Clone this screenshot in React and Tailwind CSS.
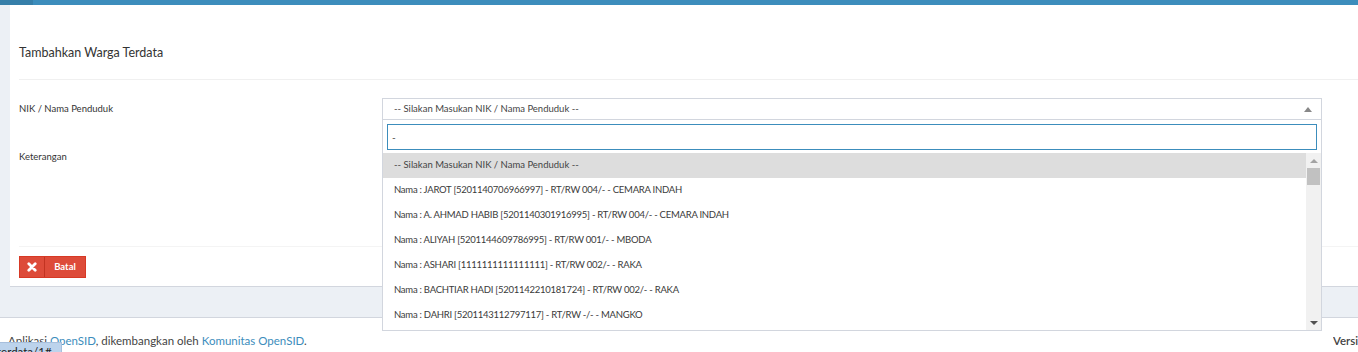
import React from "react";

const options = [
  "Nama : JAROT [5201140706966997] - RT/RW 004/- - CEMARA INDAH",
  "Nama : A. AHMAD HABIB [5201140301916995] - RT/RW 004/- - CEMARA INDAH",
  "Nama : ALIYAH [5201144609786995] - RT/RW 001/- - MBODA",
  "Nama : ASHARI [1111111111111111] - RT/RW 002/- - RAKA",
  "Nama : BACHTIAR HADI [5201142210181724] - RT/RW 002/- - RAKA",
  "Nama : DAHRI [5201143112797117] - RT/RW -/- - MANGKO",
  "Nama : DARMAWAN [5201140105836993] - RT/RW 003/- - MANGKO",
];

export default function App() {
  return (
    <div
      className="relative h-[352px] w-[1358px] overflow-hidden bg-[#ecf0f5] text-[#333]"
      style={{ fontFamily: "Lato, 'Noto Sans', sans-serif" }}
    >
      {/* top bar */}
      <div className="flex h-[5px]">
        <div className="w-[33px] bg-[#367fa9]" />
        <div className="flex-1 bg-[#3c8dbc]" />
      </div>

      <div className="pl-[10px]">
        <div className="w-[1400px] border-b border-[#d2d6de] bg-white px-[9px]">
          <div className="flex h-[75px] items-end border-b border-[#f0f0f0] pb-[16px]">
            <h3 className="text-[12.5px] leading-[20px] text-[#333]">Tambahkan Warga Terdata</h3>
          </div>

          <div className="h-[166px] pt-[18px]">
            <div className="flex items-center">
              <label className="w-[363px] text-[9.5px] text-[#333]">NIK / Nama Penduduk</label>
              <div className="relative w-[940px]">
                <div className="flex h-[22px] items-center justify-between border border-[#d2d6de] pl-[11px] pr-[9px] text-[9.5px] text-[#444]">
                  <span>-- Silakan Masukan NIK / Nama Penduduk --</span>
                  <span className="h-0 w-0 border-x-[4px] border-b-[5px] border-x-transparent border-b-[#888]" />
                </div>

                {/* open dropdown */}
                <div className="absolute left-0 top-full z-10 w-[940px] border border-t-0 border-[#d2d6de] bg-white">
                  <div className="px-[4px] pb-[3px] pt-[4px]">
                    <div className="flex h-[26px] items-center border border-[#3c8dbc] px-[4px] text-[10px] text-[#444]">
                      -
                    </div>
                  </div>
                  <div className="flex h-[177px]">
                    <ul className="flex-1 overflow-hidden">
                      <li className="flex h-[25px] items-center bg-[#ddd] pl-[11px] text-[9.5px] text-[#444]">
                        -- Silakan Masukan NIK / Nama Penduduk --
                      </li>
                      {options.map((o) => (
                        <li
                          key={o}
                          className="flex h-[25px] items-center pl-[11px] text-[9.5px] tracking-[-0.25px] text-[#3a3a3a]"
                        >
                          {o}
                        </li>
                      ))}
                    </ul>
                    <div className="flex w-[15px] flex-col items-center bg-[#f1f1f1]">
                      <span className="mt-[6px] h-0 w-0 border-x-[4px] border-b-[4px] border-x-transparent border-b-[#a3a3a3]" />
                      <div className="mt-[5px] h-[17px] w-[13px] bg-[#c1c1c1]" />
                      <div className="flex-1" />
                      <span className="mb-[5px] h-0 w-0 border-x-[4px] border-t-[4px] border-x-transparent border-t-[#505050]" />
                    </div>
                  </div>
                </div>
              </div>
            </div>

            <div className="mt-[27px] flex items-start">
              <label className="w-[363px] pt-[3px] text-[9.5px] text-[#333]">Keterangan</label>
              <textarea className="h-[80px] w-[940px] border border-[#d2d6de]" />
            </div>
          </div>

          <div className="flex h-[40px] items-start border-t border-[#f4f4f4] pt-[9px]">
            <button className="flex h-[22px] w-[67px] items-center border border-[#d73925] bg-[#dd4b39] text-[9.5px] font-bold text-white">
              <span className="flex h-full w-[25px] items-center justify-center border-r border-[#c23321]">
                <svg width="10" height="10" viewBox="0 0 10 10">
                  <path d="M1.8 1.8 L8.2 8.2 M8.2 1.8 L1.8 8.2" stroke="white" strokeWidth="2.8" strokeLinecap="round" />
                </svg>
              </span>
              <span className="flex-1 text-center">Batal</span>
            </button>
          </div>
        </div>
      </div>

      {/* footer */}
      <div className="mt-[30px] flex h-[60px] justify-between border-t border-[#d2d6de] bg-white pl-[8px] pt-[15px] text-[11.5px] leading-[16px] text-[#444]">
        <div>
          Aplikasi <span className="text-[#3c8dbc]">OpenSID</span>, dikembangkan oleh{" "}
          <span className="text-[#3c8dbc]">Komunitas OpenSID</span>.
        </div>
        <div className="w-[25px] overflow-hidden whitespace-nowrap font-semibold">Versi 20.10</div>
      </div>

      {/* browser status bubble */}
      <div className="absolute left-0 top-[342px] h-[14px] w-[62px] overflow-hidden border-r border-t border-[#a7bfdc] bg-[#bcd3ec] text-[11.5px] leading-[18px] text-[#222]">
        <span className="-ml-[3px]">terdata/1#</span>
      </div>
    </div>
  );
}
